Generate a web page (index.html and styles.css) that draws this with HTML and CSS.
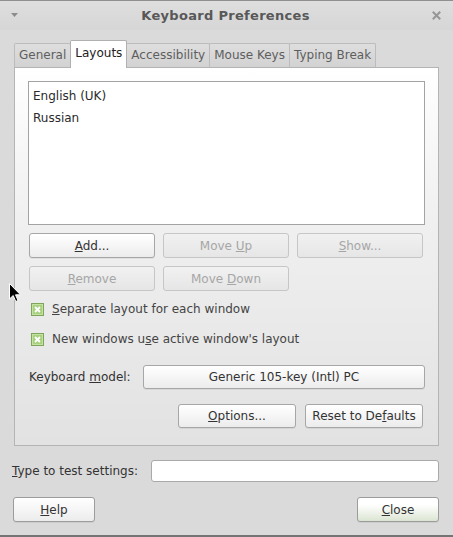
FILE: index.html
```html
<!DOCTYPE html>
<html>
<head>
<meta charset="utf-8">
<title>Keyboard Preferences</title>
<link rel="stylesheet" href="styles.css">
</head>
<body>
<div class="window">
  <div class="titlebar">
    <svg class="menu-arrow" width="8" height="5" viewBox="0 0 8 5"><path d="M0 0 H7 L3.5 4 Z" fill="#8c8c8c"/></svg>
    <span class="title">Keyboard Preferences</span>
    <svg class="close-x" width="9" height="9" viewBox="0 0 9 9"><path d="M1.5 1.5 L7.5 7.5 M7.5 1.5 L1.5 7.5" stroke="#959595" stroke-width="2" stroke-linecap="square"/></svg>
  </div>
  <div class="content">
    <div class="tabs">
      <div class="tab">General</div>
      <div class="tab active">Layouts</div>
      <div class="tab">Accessibility</div>
      <div class="tab">Mouse Keys</div>
      <div class="tab">Typing Break</div>
    </div>
    <div class="page">
      <div class="list">
        <div class="item">English (UK)</div>
        <div class="item">Russian</div>
      </div>
      <div class="btn-grid">
        <button class="btn"><u>A</u>dd...</button>
        <button class="btn disabled">Move <u>U</u>p</button>
        <button class="btn disabled"><u>S</u>how...</button>
        <button class="btn disabled"><u>R</u>emove</button>
        <button class="btn disabled">Move <u>D</u>own</button>
      </div>
      <div class="checks">
        <div class="check"><span class="box"><svg width="7" height="7" viewBox="0 0 7 7"><path d="M1 1 L6 6 M6 1 L1 6" stroke="#fff" stroke-width="1.8"/></svg></span><span><u>S</u>eparate layout for each window</span></div>
        <div class="check"><span class="box"><svg width="7" height="7" viewBox="0 0 7 7"><path d="M1 1 L6 6 M6 1 L1 6" stroke="#fff" stroke-width="1.8"/></svg></span><span>New windows u<u>s</u>e active window's layout</span></div>
      </div>
      <div class="model-row">
        <span class="label">Keyboard <u>m</u>odel:</span>
        <button class="btn model">Generic 105-key (Intl) PC</button>
      </div>
      <div class="opt-row">
        <button class="btn wide"><u>O</u>ptions...</button>
        <button class="btn wide">Reset to De<u>f</u>aults</button>
      </div>
    </div>
    <div class="test-row">
      <span class="label"><u>T</u>ype to test settings:</span>
      <div class="entry"></div>
    </div>
    <div class="bottom-row">
      <button class="btn action"><u>H</u>elp</button>
      <button class="btn action default"><u>C</u>lose</button>
    </div>
  </div>
  <svg class="cursor" width="13" height="20" viewBox="0 0 13 20"><path d="M0.5 0.5 V16 L4.2 12.5 L6.8 18.5 L9 17.5 L6.5 11.8 H11.5 Z" fill="#000" stroke="#fff" stroke-width="1"/></svg>
</div>
</body>
</html>
```
FILE: styles.css
```css
* { box-sizing: border-box; }
html, body { margin: 0; padding: 0; }
body {
  background: #d9d9d9;
  font-family: "DejaVu Sans", sans-serif;
  font-size: 12px;
  color: #3c3c3c;
}
.window {
  position: relative;
  width: 453px;
  height: 537px;
  background: #dadada;
  border-top: 1px solid #8f8f8f;
  border-bottom: 2px solid #747474;
  display: flex;
  flex-direction: column;
}
.titlebar {
  height: 29px;
  display: flex;
  align-items: center;
  justify-content: space-between;
  padding: 0 12px 1px 11px;
  background: linear-gradient(#dedede, #d6d6d6);
}
.title {
  font-weight: bold;
  font-size: 13px;
  color: #585858;
  letter-spacing: 0.3px;
}
.menu-arrow { margin-top: 1px; }
.content {
  flex: 1;
  padding: 10px 14px 0 14px;
  display: flex;
  flex-direction: column;
}
.tabs {
  display: flex;
  align-items: flex-end;
  height: 28px;
  position: relative;
  z-index: 2;
  margin-bottom: -1px;
}
.tab {
  height: 24px;
  padding: 4px 4px 0 4px;
  background: linear-gradient(#dedede, #d2d2d2);
  border: 1px solid #bcbcbc;
  border-bottom: none;
  border-radius: 2px 2px 0 0;
  color: #5e5e5e;
  margin-bottom: 1px;
}
.tab + .tab { margin-left: -1px; }
.tab.active {
  height: 28px;
  background: #ffffff;
  border-color: #b0b0b0;
  color: #222;
  padding: 5px 4px 0 4px;
  margin-bottom: 0;
  position: relative;
  z-index: 3;
}
.page {
  border: 1px solid #b4b4b4;
  background: linear-gradient(#ffffff 0%, #f0f0f0 40%, #e2e2e2 100%);
  padding: 13px 13px 16px 13px;
  height: 379px;
}
.list {
  height: 144px;
  background: #fff;
  border: 1px solid #a3a3a3;
  padding: 4px 4px;
  color: #2a2a2a;
}
.item { height: 22px; line-height: 20px; }
.btn-grid {
  display: grid;
  grid-template-columns: repeat(3, 126px);
  grid-auto-rows: 25px;
  gap: 8px;
  margin: 8px 0 0 1px;
}
.btn {
  font-family: inherit;
  font-size: 12px;
  color: #333;
  border: 1px solid #a6a6a6;
  border-radius: 3px;
  background: linear-gradient(#ffffff, #ececec);
  box-shadow: 0 1px 0 rgba(0,0,0,0.06);
  padding: 0;
  height: 25px;
  margin: 0;
}
.btn.disabled {
  color: #a6a6a6;
  border-color: #c6c6c6;
  background: linear-gradient(#f1f1f1, #e6e6e6);
  box-shadow: none;
}
.checks {
  margin: 11px 0 0 3px;
  display: flex;
  flex-direction: column;
  gap: 16px;
}
.check {
  display: flex;
  align-items: center;
  gap: 8px;
  height: 14px;
  color: #444;
}
.box {
  width: 13px;
  height: 13px;
  border: 1px solid #7fa55a;
  background: #a9d07f;
  display: flex;
  align-items: center;
  justify-content: center;
  box-shadow: inset 0 0 0 1px #c4e2a2;
}
.box svg { display: block; }
.model-row {
  display: flex;
  align-items: center;
  justify-content: space-between;
  margin: 18px 0 0 1px;
  height: 25px;
}
.label { color: #333; }
.btn.model { width: 282px; height: 24px; }
.opt-row {
  display: flex;
  justify-content: flex-end;
  gap: 9px;
  margin: 15px 2px 0 0;
}
.btn.wide { width: 118px; height: 24px; }
.test-row {
  display: flex;
  align-items: center;
  justify-content: space-between;
  margin: 14px 0 0 -2px;
  height: 22px;
}
.entry {
  width: 288px;
  height: 22px;
  background: #fff;
  border: 1px solid #a9a9a9;
  border-radius: 3px;
}
.bottom-row {
  display: flex;
  justify-content: space-between;
  margin: 15px 0 0 -1px;
}
.btn.action { width: 82px; height: 25px; border-color: #9c9c9c; }
.btn.default { background: linear-gradient(#ffffff 30%, #dbe5d2); }
.cursor {
  position: absolute;
  left: 9px;
  top: 282px;
}
```
